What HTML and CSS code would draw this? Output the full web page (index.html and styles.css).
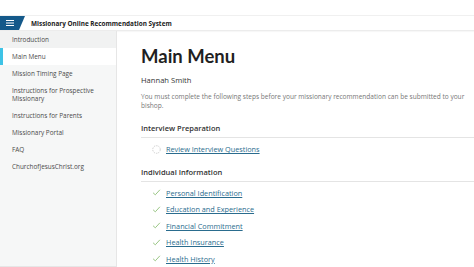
FILE: index.html
```html
<!DOCTYPE html>
<html lang="en">
<head>
    <meta charset="UTF-8">
    <meta name="viewport" content="width=device-width, initial-scale=1.0">
    <title>Missionary Online Recommendation System</title>
    <link rel="stylesheet" href="styles.css">
</head>
<body>
    <div class="top-space"></div>
    <header class="app-header">
        <button class="menu-btn" aria-label="Menu">
            <svg width="8" height="6" viewBox="0 0 8 6">
                <rect x="0" y="0" width="8" height="1" fill="#fff"/>
                <rect x="0" y="2.5" width="8" height="1" fill="#fff"/>
                <rect x="0" y="5" width="8" height="1" fill="#fff"/>
            </svg>
        </button>
        <div class="app-title">Missionary Online Recommendation System</div>
    </header>
    <div class="layout">
        <nav class="sidebar">
            <a class="nav-item intro" href="#">Introduction</a>
            <a class="nav-item active" href="#">Main Menu</a>
            <a class="nav-item" href="#">Mission Timing Page</a>
            <a class="nav-item" href="#">Instructions for Prospective Missionary</a>
            <a class="nav-item" href="#">Instructions for Parents</a>
            <a class="nav-item" href="#">Missionary Portal</a>
            <a class="nav-item" href="#">FAQ</a>
            <a class="nav-item" href="#">ChurchofJesusChrist.org</a>
        </nav>
        <main class="content">
            <h1 class="page-title">Main Menu</h1>
            <div class="user-name">Hannah Smith</div>
            <p class="intro-text">You must complete the following steps before your missionary recommendation can be submitted to your bishop.</p>

            <h2 class="section-title">Interview Preparation</h2>
            <ul class="steps">
                <li>
                    <svg class="status" width="9" height="9" viewBox="0 0 10 10">
                        <circle cx="5" cy="5" r="4.2" fill="none" stroke="#c4c4c4" stroke-width="0.9" stroke-dasharray="1.6 1.1"/>
                    </svg>
                    <a href="#">Review Interview Questions</a>
                </li>
            </ul>

            <h2 class="section-title">Individual Information</h2>
            <ul class="steps">
                <li>
                    <svg class="status" width="8" height="7" viewBox="0 0 8 7"><path d="M0.6 3.8 L2.8 5.8 L7.4 0.8" fill="none" stroke="#8fbf78" stroke-width="0.9"/></svg>
                    <a href="#">Personal Identification</a>
                </li>
                <li>
                    <svg class="status" width="8" height="7" viewBox="0 0 8 7"><path d="M0.6 3.8 L2.8 5.8 L7.4 0.8" fill="none" stroke="#8fbf78" stroke-width="0.9"/></svg>
                    <a href="#">Education and Experience</a>
                </li>
                <li>
                    <svg class="status" width="8" height="7" viewBox="0 0 8 7"><path d="M0.6 3.8 L2.8 5.8 L7.4 0.8" fill="none" stroke="#8fbf78" stroke-width="0.9"/></svg>
                    <a href="#">Financial Commitment</a>
                </li>
                <li>
                    <svg class="status" width="8" height="7" viewBox="0 0 8 7"><path d="M0.6 3.8 L2.8 5.8 L7.4 0.8" fill="none" stroke="#8fbf78" stroke-width="0.9"/></svg>
                    <a href="#">Health Insurance</a>
                </li>
                <li>
                    <svg class="status" width="8" height="7" viewBox="0 0 8 7"><path d="M0.6 3.8 L2.8 5.8 L7.4 0.8" fill="none" stroke="#8fbf78" stroke-width="0.9"/></svg>
                    <a href="#">Health History</a>
                </li>
            </ul>
        </main>
    </div>
</body>
</html>
```

FILE: styles.css
```css
* {
  box-sizing: border-box;
}

body {
  margin: 0;
  font-family: "Open Sans", "Liberation Sans", sans-serif;
  background-color: #fff;
  color: #333;
  overflow: hidden;
}

.top-space {
  height: 15px;
}

.app-header {
  display: flex;
  align-items: center;
  height: 16px;
  border-top: 1px solid #f0f0f0;
  border-bottom: 1px solid #ececec;
  box-shadow: 0 1px 1px rgba(0, 0, 0, 0.03);
}

.menu-btn {
  display: flex;
  align-items: center;
  justify-content: center;
  width: 25px;
  height: 100%;
  padding: 0 6px 0 0;
  border: none;
  background-color: #14598a;
  clip-path: polygon(0 0, 100% 0, 76% 100%, 0 100%);
  cursor: pointer;
}

.app-title {
  margin-left: 6px;
  font-size: 6.4px;
  font-weight: 700;
  color: #222;
}

.layout {
  display: flex;
  height: 236px;
}

.sidebar {
  display: flex;
  flex-direction: column;
  width: 117px;
  flex-shrink: 0;
  background-color: #f6f7f7;
  border-right: 1px solid #e6e6e6;
  border-bottom: 1px solid #e6e6e6;
}

.nav-item {
  display: block;
  padding: 4.5px 12px;
  font-size: 6.4px;
  line-height: 8px;
  color: #4a4a4a;
  text-decoration: none;
}

.nav-item.intro {
  background-color: #f1f2f2;
}

.nav-item.active {
  background-color: #fff;
  box-shadow: inset 3px 0 0 #3ec3e6;
}

.content {
  flex: 1;
  min-width: 0;
  padding: 12px 0 0 24px;
}

.page-title {
  margin: 0;
  font-family: Lato, "Open Sans", sans-serif;
  font-size: 18.5px;
  line-height: 26px;
  font-weight: 700;
  color: #1f1f22;
}

.user-name {
  margin-top: 6px;
  font-size: 7.6px;
  line-height: 10px;
  color: #333;
}

.intro-text {
  margin: 7px 0 0;
  font-size: 6.55px;
  line-height: 9px;
  color: #777;
}

.section-title {
  margin: 13px 0 0;
  padding-bottom: 3px;
  font-size: 7.5px;
  line-height: 11px;
  font-weight: 600;
  color: #333;
  border-bottom: 1px solid #e4e4e4;
}

.steps + .section-title {
  margin-top: 9px;
}

.steps {
  list-style: none;
  margin: 0;
  padding: 3px 0 0 11px;
}

.steps li {
  display: flex;
  align-items: center;
  height: 16.5px;
}

.status {
  width: 9px;
  margin-right: 5px;
}

.steps a {
  font-size: 7.3px;
  color: #2a6c8e;
  text-decoration: underline;
}
```
